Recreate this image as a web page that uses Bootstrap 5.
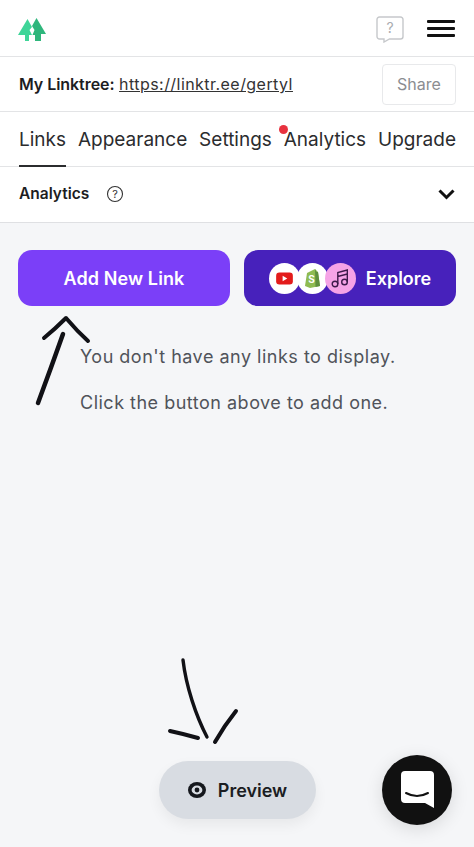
<!DOCTYPE html>
<html lang="en">
<head>
<meta charset="utf-8">
<title>Linktree admin</title>
<link href="https://cdn.jsdelivr.net/npm/bootstrap@5.3.0/dist/css/bootstrap.min.css" rel="stylesheet">
<style>
html, body { height: 100%; }
body { font-family: Inter, "Liberation Sans", sans-serif; background: #f5f6f8; color: #1d1d1f; overflow: hidden; }
.app-shell { position: relative; height: 847px; }
.top-bar { height: 57px; padding: 0 19px 0 18px; border-bottom: 1px solid #e3e4e6; background: #fff; }
.help-bubble { margin-right: 23px; margin-top: 2px; }
.menu-lines { width: 28px; }
.menu-lines span { display: block; height: 3px; background: #111; margin: 4px 0; border-radius: 1px; }
.tree-logo { margin-top: 2px; }
.tree-row { height: 55px; padding: 0 18px 0 19px; border-bottom: 1px solid #e3e4e6; background: #fff; font-size: 16px; }
.tree-row b { font-weight: 600; letter-spacing: -.05px; }
.tree-row a { color: #333; letter-spacing: .45px; }
.share-btn { width: 74px; height: 41px; border: 1px solid #e8e9eb; border-radius: 4px; color: #8b8d91; background: #fff; font-size: 16px; padding: 0; }
.tab-row { height: 55px; padding: 0 18px 0 19px; border-bottom: 1px solid #e3e4e6; background: #fff; font-size: 19px; }
.tab-item { position: relative; height: 54px; padding-top: 14px; color: #2b2c2e; text-decoration: none; }
.tab-item.is-active::after { content: ""; position: absolute; left: 0; right: 0; bottom: -1px; height: 2px; background: #2b2c2e; }
.red-dot { position: absolute; left: -5px; top: 13px; width: 9px; height: 9px; border-radius: 50%; background: #e8323f; }
.stats-row { height: 56px; padding: 0 19px; border-bottom: 1px solid #dfe0e3; background: #fff; font-size: 15.500px; font-weight: 600; }
.stats-row > span { margin-top: -1px; }
.stats-help { margin-left: 17px; margin-top: -2px; }
.action-row { padding: 27px 18px 0; gap: 14px; }
.action-btn { flex: 1 1 0; height: 56px; border-radius: 14px; border: 0; color: #fff; font-size: 18px; font-weight: 600; padding: 0; }
.add-btn { background: #7b3ff8; letter-spacing: .1px; }
.explore-btn { background: #4721bb; }
.app-dot { width: 31px; height: 31px; border-radius: 50%; background: #fff; margin-right: -3px; position: relative; }
.app-dot.is-pink { background: #f5a3e6; margin-right: 10px; }
.empty-text { padding: 38px 0 0 80px; color: #50535a; font-size: 18px; letter-spacing: .5px; }
.empty-text p { margin: 0 0 21px; line-height: 25px; }
.scribble { position: absolute; left: 0; top: 0; pointer-events: none; }
.preview-btn { position: absolute; left: 159px; top: 761px; width: 157px; height: 58px; border: 0; border-radius: 29px; background: #d8dce2; color: #1b1d22; font-size: 18px; font-weight: 600; gap: 12px; padding: 0; box-shadow: 0 6px 14px rgba(0,0,0,.06); }
.chat-btn { position: absolute; left: 382px; top: 755px; width: 70px; height: 70px; border: 0; padding: 0; border-radius: 50%; background: #111; box-shadow: 0 4px 18px rgba(0,0,0,.12); }
</style>
</head>
<body>
<div class="app-shell">
  <header class="top-bar d-flex align-items-center">
    <svg class="tree-logo" width="28" height="23" viewBox="0 0 28 23">
      <path d="M9.500 1 L14 9 L11.500 12 L14 17 H11 V23 H7 V17 H0 Z" fill="#3ed598"/>
      <path d="M18.500 0 L28 16 H23 V23 H17 V17 H14.500 L16.500 12 L14 8 Z" fill="#2fb67c"/>
    </svg>
    <div class="ms-auto d-flex align-items-center">
      <svg class="help-bubble" width="28" height="27" viewBox="0 0 28 27">
        <path d="M3.500 1h21a2.500 2.500 0 0 1 2.500 2.500v17a2.500 2.500 0 0 1-2.500 2.500H13.500l-5.500 3v-3H3.500A2.500 2.500 0 0 1 1 20.500v-17A2.500 2.500 0 0 1 3.500 1z" fill="none" stroke="#c6c8cb" stroke-width="1.400"/>
        <text x="14" y="17" text-anchor="middle" font-size="14" fill="#a9abaf" font-family="Inter, sans-serif">?</text>
      </svg>
      <div class="menu-lines"><span></span><span></span><span></span></div>
    </div>
  </header>

  <div class="tree-row d-flex align-items-center justify-content-between">
    <div><b>My Linktree:</b> <a href="#">https://linktr.ee/gertyl</a></div>
    <button class="btn share-btn">Share</button>
  </div>

  <nav class="tab-row d-flex justify-content-between">
    <a class="tab-item is-active" href="#">Links</a>
    <a class="tab-item" href="#">Appearance</a>
    <a class="tab-item" href="#">Settings</a>
    <a class="tab-item" href="#"><span class="red-dot"></span>Analytics</a>
    <a class="tab-item" href="#">Upgrade</a>
  </nav>

  <div class="stats-row d-flex align-items-center">
    <span>Analytics</span>
    <svg class="stats-help" width="18" height="18" viewBox="0 0 18 18">
      <circle cx="9" cy="9" r="7.500" fill="none" stroke="#333" stroke-width="1.100"/>
      <text x="9" y="13" text-anchor="middle" font-size="11" fill="#333" font-family="Inter, sans-serif" font-weight="400">?</text>
    </svg>
    <svg class="ms-auto" width="17" height="11" viewBox="0 0 17 11">
      <path d="M1.500 1.500 L8.500 8.500 L15.500 1.500" fill="none" stroke="#111" stroke-width="3"/>
    </svg>
  </div>

  <div class="action-row d-flex">
    <button class="action-btn add-btn">Add New Link</button>
    <button class="action-btn explore-btn d-flex align-items-center justify-content-center">
      <span class="app-dot d-flex align-items-center justify-content-center">
        <svg width="17" height="13" viewBox="0 0 18 14"><rect width="18" height="13" y="0.500" rx="3.500" fill="#e31b1b"/><path d="M7 4 L12 7 L7 10 Z" fill="#fff"/></svg>
      </span>
      <span class="app-dot d-flex align-items-center justify-content-center">
        <svg width="15" height="20" viewBox="0 0 15 20"><path d="M2 5 L10 1 L13 4 L15 18 L5 20 L0 18 Z" fill="#8fbb52"/><path d="M10 1 L11.500 4 L13 4 L15 18 L10.500 19 Z" fill="#5e8e3e"/><text x="6.500" y="15" text-anchor="middle" font-size="10" font-weight="700" fill="#fff" font-family="Inter, sans-serif">S</text></svg>
      </span>
      <span class="app-dot is-pink d-flex align-items-center justify-content-center">
        <svg width="18" height="20" viewBox="0 0 18 20" fill="none" stroke="#3d1a4a" stroke-width="1.400"><circle cx="4" cy="16" r="2.800"/><circle cx="13.500" cy="14" r="2.800"/><path d="M6.800 16 V4.500 L16.300 2 V14 M6.800 8.500 L16.300 6"/></svg>
      </span>
      Explore
    </button>
  </div>

  <div class="empty-text">
    <p>You don't have any links to display.</p>
    <p>Click the button above to add one.</p>
  </div>

  <svg class="scribble" width="474" height="847" viewBox="0 0 474 847" fill="none" stroke="#111116" stroke-linecap="round" stroke-linejoin="round">
    <path d="M38 403 Q51 368 63 334" stroke-width="4.500"/>
    <path d="M44 338 Q55 329 66 318 Q77 331 88 341" stroke-width="4"/>
    <path d="M183 660 C186 686 196 716 207 737" stroke-width="3.400"/>
    <path d="M170 731 Q184 734 198 738" stroke-width="4"/>
    <path d="M215 742 Q224 726 236 711" stroke-width="4"/>
  </svg>

  <button class="preview-btn d-flex align-items-center justify-content-center">
    <svg width="18" height="16" viewBox="0 0 18 16"><ellipse cx="9" cy="8" rx="9" ry="8" fill="#15181d"/><ellipse cx="9" cy="8" rx="5.400" ry="4.400" fill="#d8dce2"/><circle cx="9" cy="8" r="2.400" fill="#15181d"/></svg>
    Preview
  </button>

  <button class="chat-btn d-flex align-items-center justify-content-center">
    <svg width="33" height="38" viewBox="0 0 33 38">
      <path d="M4 0 H29 A4 4 0 0 1 33 4 V37 L24 32 H4 A4 4 0 0 1 0 28 V4 A4 4 0 0 1 4 0 Z" fill="#fff"/>
      <path d="M5 22 Q16 28 27 22" fill="none" stroke="#111" stroke-width="2" stroke-linecap="round"/>
    </svg>
  </button>
</div>
<script src="https://cdn.jsdelivr.net/npm/bootstrap@5.3.0/dist/js/bootstrap.bundle.min.js"></script>
</body>
</html>
